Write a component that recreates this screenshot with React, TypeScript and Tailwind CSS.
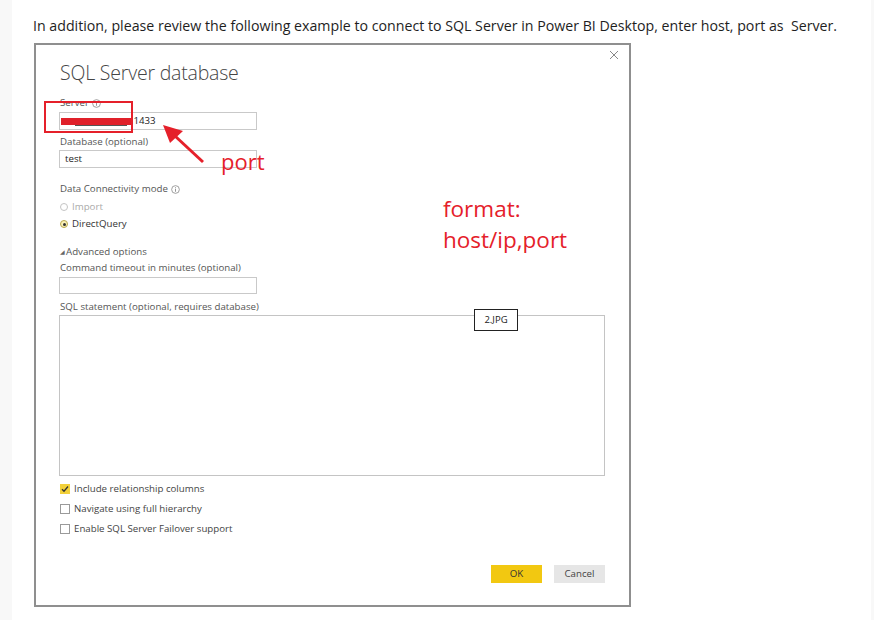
import React from "react";

const ui = { fontFamily: '"Open Sans", "Noto Sans", sans-serif' };

function Info() {
  return (
    <svg width="9" height="9" viewBox="0 0 10 10" className="ml-[3px] inline-block">
      <circle cx="5" cy="5" r="4.3" fill="none" stroke="#8a8a8a" strokeWidth="0.9" />
      <rect x="4.5" y="4.2" width="1" height="3.3" fill="#8a8a8a" />
      <rect x="4.5" y="2.5" width="1" height="1" fill="#8a8a8a" />
    </svg>
  );
}

function Check({ checked, label }: { checked?: boolean; label: string }) {
  return (
    <div className="flex h-[14px] items-center">
      {checked ? (
        <span className="flex h-[10px] w-[10px] items-center justify-center bg-[#f2d03a]">
          <svg width="8" height="8" viewBox="0 0 8 8">
            <path d="M1 4.2 L3 6.2 L7 1.5" fill="none" stroke="#333" strokeWidth="1.3" />
          </svg>
        </span>
      ) : (
        <span className="h-[10px] w-[10px] border border-[#9a9a9a] bg-white" />
      )}
      <span className="ml-[4px] text-[9.7px] text-[#444]">{label}</span>
    </div>
  );
}

export default function App() {
  return (
    <div className="flex h-[620px] w-[874px] bg-[#f8f8f8]" style={ui}>
      <div className="w-[12px]" />
      <main className="h-full w-[859px] bg-white pl-[21px] pt-[16px]">
        <p className="h-[20px] whitespace-nowrap text-[14.2px] leading-[20px] text-[#1e1e1e]">
          In addition, please review the following example to connect to SQL Server in Power BI Desktop, enter host, port as&nbsp; Server.
        </p>

        <div className="relative ml-[1px] mt-[7px] h-[564px] w-[597px] border-2 border-[#8f8f8f] bg-white pl-[24px] pt-[17px]">
          {/* close */}
          <svg width="10" height="10" viewBox="0 0 10 10" className="absolute right-[10px] top-[5px]">
            <path d="M1 1 L9 9 M9 1 L1 9" stroke="#888" strokeWidth="1" />
          </svg>

          <h1 className="h-[22px] text-[19.5px] font-light leading-[22px] tracking-[-0.2px] text-[#454545]">
            SQL Server database
          </h1>

          <div className="mt-[12px] flex h-[14px] items-center text-[9.7px] text-[#555]">
            Server
            <Info />
          </div>
          <div className="-ml-[1px] mt-[2px] flex h-[18px] w-[198px] items-center border border-[#c9c9c9] pl-[1px] text-[9.7px] text-[#222]">
            <span className="relative h-[7px] w-[70px] bg-[#e0202a]">
              <span className="absolute left-[14px] top-[7px] h-[1px] w-[52px] bg-[#555]" />
            </span>
            <span>,1433</span>
          </div>

          <div className="mt-[5px] flex h-[14px] items-center text-[9.7px] text-[#555]">Database (optional)</div>
          <div className="-ml-[1px] mt-[1px] flex h-[18px] w-[198px] items-center border border-[#c9c9c9] pl-[5px] text-[9.7px] text-[#222]">
            test
          </div>

          <div className="mt-[14px] flex h-[14px] items-center text-[9.7px] text-[#555]">
            Data Connectivity mode
            <Info />
          </div>
          <div className="mt-[4px] flex h-[14px] items-center text-[9.7px] text-[#aaa]">
            <span className="h-[8px] w-[8px] rounded-full border border-[#c4c4c4]" />
            <span className="ml-[4px]">Import</span>
          </div>
          <div className="mt-[3px] flex h-[14px] items-center text-[9.7px] text-[#333]">
            <span className="flex h-[8px] w-[8px] items-center justify-center rounded-full border border-[#b9a850] bg-[#fbf2b8]">
              <span className="h-[3px] w-[3px] rounded-full bg-[#333]" />
            </span>
            <span className="ml-[4px]">DirectQuery</span>
          </div>

          <div className="mt-[14px] flex h-[14px] items-center text-[9.7px] text-[#555]">
            <span className="text-[6px] text-[#666]">◢</span>
            <span className="ml-[1px]">Advanced options</span>
          </div>
          <div className="mt-[2px] flex h-[14px] items-center text-[9.7px] text-[#555]">Command timeout in minutes (optional)</div>
          <div className="-ml-[1px] mt-[2px] h-[17px] w-[198px] border border-[#c9c9c9]" />

          <div className="mt-[6px] flex h-[14px] items-center text-[9.7px] text-[#555]">SQL statement (optional, requires database)</div>
          <div className="-ml-[1px] mt-[1px] h-[161px] w-[546px] border border-[#c4c4c4]" />

          <div className="mt-[6px] flex flex-col gap-[6px]">
            <Check checked label="Include relationship columns" />
            <Check label="Navigate using full hierarchy" />
            <Check label="Enable SQL Server Failover support" />
          </div>

          <div className="-ml-[1px] mt-[29px] flex w-[546px] justify-end gap-[12px] text-[9.7px]">
            <button className="h-[18px] w-[51px] bg-[#f2c811] text-[#333]">OK</button>
            <button className="h-[18px] w-[51px] bg-[#e6e6e6] text-[#444]">Cancel</button>
          </div>

          {/* annotations */}
          <div className="absolute left-[8px] top-[56px] h-[32px] w-[89px] border-2 border-[#e5202a]" />
          <svg width="50" height="45" viewBox="0 0 50 45" className="absolute left-[125px] top-[78px]">
            <path d="M42 39 L14 13" stroke="#e5202a" strokeWidth="3" />
            <polygon points="2,2 22,8 9,20" fill="#e5202a" />
          </svg>
          <span className="absolute left-[185px] top-[101px] text-[22px] leading-[30px] text-[#e5202a]">port</span>
          <div className="absolute left-[407px] top-[148px] text-[22.5px] leading-[31px] text-[#e5202a]">
            <div>format:</div>
            <div>host/ip,port</div>
          </div>
          <div className="absolute left-[438px] top-[264px] flex h-[22px] w-[44px] items-center justify-center border border-[#222] bg-white text-[9.5px] text-[#222]">
            2.JPG
          </div>
        </div>
      </main>
      <div className="w-[3px]" />
    </div>
  );
}
